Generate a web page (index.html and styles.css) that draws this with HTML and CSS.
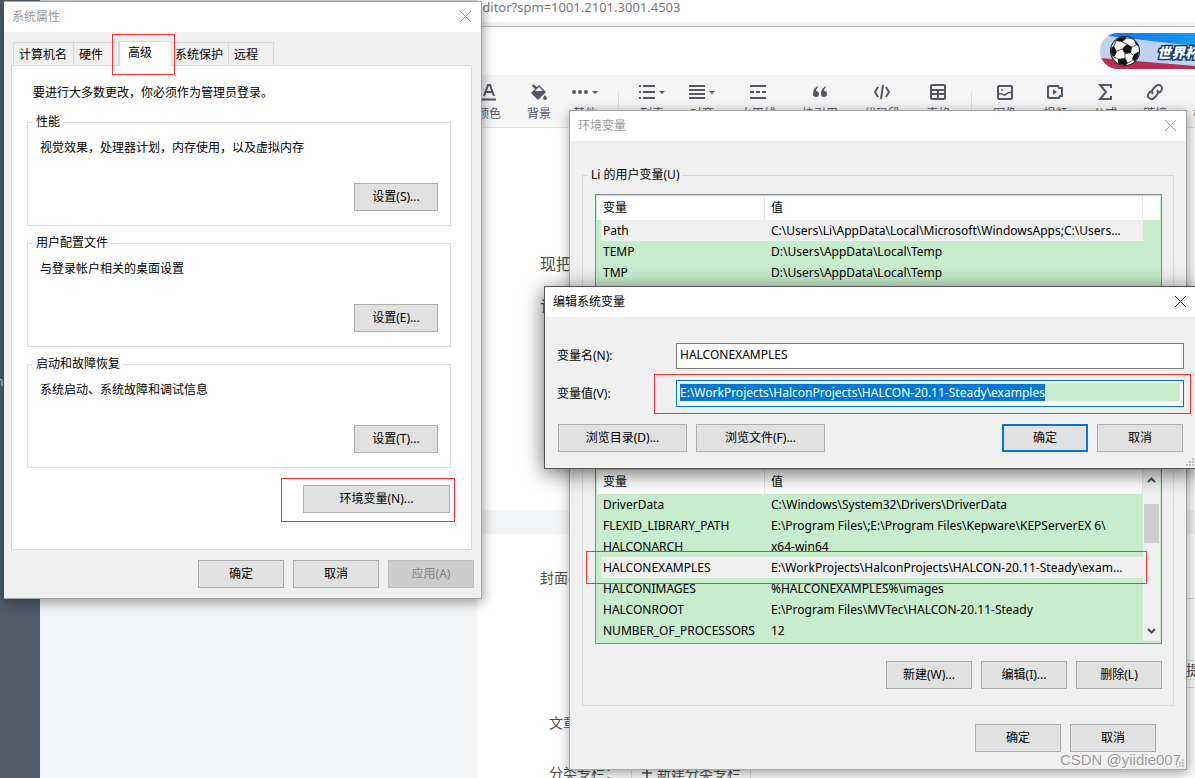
FILE: index.html
```html
<!DOCTYPE html>
<html lang="zh-CN">
<head>
    <meta charset="UTF-8">
    <meta name="viewport" content="width=device-width, initial-scale=1.0">
    <title>环境变量</title>
    <link rel="stylesheet" href="styles.css">
</head>
<body>
    <!-- blog editor behind the dialogs -->
    <div class="desktop">
        <div class="sidebar">n</div>
        <div class="panel"></div>
        <main class="editor">
            <div class="address">editor?spm=1001.2101.3001.4503</div>
            <header class="header">
                <svg class="banner" width="120" height="36" viewBox="0 0 120 36">
                    <defs>
                        <linearGradient id="sky" x1="0" x2="1" y1="0" y2="0">
                            <stop offset="0" stop-color="#1f6fe8"/>
                            <stop offset="1" stop-color="#10a4f8"/>
                        </linearGradient>
                        <clipPath id="pill"><rect width="140" height="36" rx="18"/></clipPath>
                        <clipPath id="ball"><circle cx="25" cy="18" r="14"/></clipPath>
                    </defs>
                    <g clip-path="url(#pill)">
                        <rect width="120" height="36" fill="#bcd2f0"/>
                        <path d="M0 0H120V16L0 2Z" fill="url(#sky)"/>
                        <path d="M0 25L120 35V36H0Z" fill="#b92e50"/>
                    </g>
                    <circle cx="25" cy="18" r="15" fill="#111"/>
                    <circle cx="25" cy="18" r="14" fill="#fff"/>
                    <g clip-path="url(#ball)">
                        <path d="M27 11l5 3-1 6-6 1-3-5z M14 4l9-2 4 3-5 4-6-1z M9 15l5-2 3 6-3 5-5-2z M18 26l7-1 3 5-4 4-6-3z M34 21l6-3 1 7-6 4-3-3z M33 5l6 4 1 5-4-2z" fill="#111"/>
                        <path d="M22 9l5 2M32 14l4-2M31 20l2 2M25 21v4M22 16l-5 2M16 8l-2 5M14 24l4 2M28 30l5-3M27 5l6 1" stroke="#555" fill="none"/>
                    </g>
                    <text class="banner-text" x="57" y="25">世界杯</text>
                </svg>
            </header>
            <div class="toolbar">
                <button class="tool"><svg width="16" height="18" viewBox="0 0 16 18"><path d="M3 13L7 2h2l4 11M5 9h6M1 16.500h14" stroke-width="2"/></svg><span>颜色</span></button>
                <button class="tool"><svg width="18" height="18" viewBox="0 0 18 18"><path class="solid" d="M3 1l4 3 2-2 7 7-8 8-7-7 4-4-3-3z"/><path d="M5 8l4-4 4 4z" fill="#f5f5f5" stroke="none"/><path class="solid" d="M15 12l2 3a2 2 0 1 1-4 0z"/></svg><span>背景</span></button>
                <button class="tool more"><svg width="28" height="18" viewBox="0 0 28 18"><circle class="solid" cx="3" cy="9" r="2"/><circle class="solid" cx="9" cy="9" r="2"/><circle class="solid" cx="15" cy="9" r="2"/><path class="solid" d="M21 8h6l-3 3z"/></svg><span>其他</span></button>
                <span class="divider"></span>
                <button class="tool"><svg width="28" height="18" viewBox="0 0 28 18"><path d="M1 3h2M1 9h2M1 15h2M5 3h12M5 9h12M5 15h12" stroke-width="2"/><path class="solid" d="M21 8h6l-3 3z"/></svg><span>列表</span></button>
                <button class="tool"><svg width="28" height="18" viewBox="0 0 28 18"><path d="M1 3h16M1 7h16M1 11h16M1 15h16" stroke-width="2"/><path class="solid" d="M21 8h6l-3 3z"/></svg><span>对齐</span></button>
                <button class="tool"><svg width="18" height="18" viewBox="0 0 18 18"><path d="M1 3h16M1 9h4M7 9h4M13 9h4M1 15h16" stroke-width="2"/></svg><span>水平线</span></button>
                <button class="tool"><svg width="16" height="18" viewBox="0 0 16 18"><path class="solid" d="M6 3C2 5 1 8 1 11a3 3 0 1 0 3-3c0-2 1-3 2-4zM14 3c-4 2-5 5-5 8a3 3 0 1 0 3-3c0-2 1-3 2-4z"/></svg><span>块引用</span></button>
                <button class="tool"><svg width="18" height="18" viewBox="0 0 18 18"><path d="M5 4L2 9l3 5M13 4l3 5-3 5M10 2L8 16" stroke-width="2"/></svg><span>代码段</span></button>
                <button class="tool"><svg width="18" height="18" viewBox="0 0 18 18"><rect x="2" y="2" width="14" height="14" rx="1" stroke-width="2"/><path d="M2 7h14M2 11h14M9 7v9" stroke-width="2"/></svg><span>表格</span></button>
                <span class="divider"></span>
                <button class="tool"><svg width="18" height="18" viewBox="0 0 18 18"><rect x="2" y="3" width="14" height="13" rx="1" stroke-width="2"/><path d="M2 12c3-4 5 1 7 0s3-4 7-2" stroke-width="1.500"/><circle class="solid" cx="6" cy="7" r="1"/></svg><span>图像</span></button>
                <button class="tool"><svg width="18" height="18" viewBox="0 0 18 18"><path d="M13 15H3a1 1 0 0 1-1-1V4a1 1 0 0 1 1-1h9l1 2h3v8h-2z" stroke-width="2"/><path class="solid" d="M7 6l4 3-4 3z"/></svg><span>视频</span></button>
                <button class="tool"><svg width="16" height="18" viewBox="0 0 16 18"><path d="M14 5V2H3l6 7-6 7h11v-3" stroke-width="2"/></svg><span>公式</span></button>
                <button class="tool"><svg width="18" height="18" viewBox="0 0 18 18"><path d="M7 11c-2-2-1-4 1-6l2-2c3-3 8 1 5 5l-2 2M11 7c2 2 1 4-1 6l-2 2c-3 3-8-1-5-5l2-2" stroke-width="2"/></svg><span>链接</span></button>
                <button class="tool"><svg width="18" height="18" viewBox="0 0 18 18"></svg><span>模板</span></button>
            </div>
            <article class="article">
                <p>现把</p>
                <p>记录</p>
            </article>
            <div class="band"></div>
            <section class="publish">
                <span class="publish-label">封面&amp;摘要：</span>
                <div class="summary"><button class="extract">提取摘要</button></div>
                <span class="publish-label">文章标签：</span>
                <div class="column-row">
                    <span class="publish-label">分类专栏：</span>
                    <button class="add-column"><svg width="12" height="12" viewBox="0 0 12 12"><path d="M6 1v10M1 6h10" stroke-width="1.500"/></svg>新建分类专栏</button>
                </div>
            </section>
        </main>
    </div>

    <!-- system properties -->
    <section class="window system">
        <div class="titlebar">
            <span>系统属性</span>
            <button class="close" aria-label="关闭"><svg width="11" height="11" viewBox="0 0 11 11"><path d="M0 0L11 11M11 0L0 11"/></svg></button>
        </div>
        <div class="tabs">
            <button class="tab">计算机名</button>
            <button class="tab">硬件</button>
            <div class="marked mark-tab"><button class="tab active">高级</button></div>
            <button class="tab tight">系统保护</button>
            <button class="tab">远程</button>
        </div>
        <div class="tab-page">
            <p class="notice">要进行大多数更改，你必须作为管理员登录。</p>
            <fieldset class="group">
                <legend>性能</legend>
                <p>视觉效果，处理器计划，内存使用，以及虚拟内存</p>
                <button class="btn">设置(S)...</button>
            </fieldset>
            <fieldset class="group">
                <legend>用户配置文件</legend>
                <p>与登录帐户相关的桌面设置</p>
                <button class="btn">设置(E)...</button>
            </fieldset>
            <fieldset class="group">
                <legend>启动和故障恢复</legend>
                <p>系统启动、系统故障和调试信息</p>
                <button class="btn">设置(T)...</button>
            </fieldset>
            <div class="marked mark-env"><button class="btn env-btn">环境变量(N)...</button></div>
        </div>
        <div class="actions">
            <button class="btn">确定</button>
            <button class="btn">取消</button>
            <button class="btn" disabled>应用(A)</button>
        </div>
    </section>

    <!-- environment variables -->
    <section class="window env">
        <div class="titlebar">
            <span>环境变量</span>
            <button class="close" aria-label="关闭"><svg width="11" height="11" viewBox="0 0 11 11"><path d="M0 0L11 11M11 0L0 11"/></svg></button>
        </div>
        <fieldset class="vars user-vars">
            <legend>Li 的用户变量(U)</legend>
            <div class="list">
                <table>
                    <thead><tr><th class="name">变量</th><th>值</th></tr></thead>
                    <tbody>
                        <tr class="selected"><td>Path</td><td>C:\Users\Li\AppData\Local\Microsoft\WindowsApps;C:\Users...</td></tr>
                        <tr><td>TEMP</td><td>D:\Users\AppData\Local\Temp</td></tr>
                        <tr><td>TMP</td><td>D:\Users\AppData\Local\Temp</td></tr>
                    </tbody>
                </table>
                <div class="list-end"></div>
            </div>
        </fieldset>
        <div class="vars system-vars">
            <div class="list">
                <table>
                    <thead><tr><th class="name">变量</th><th>值</th></tr></thead>
                    <tbody>
                        <tr><td>DriverData</td><td>C:\Windows\System32\Drivers\DriverData</td></tr>
                        <tr><td>FLEXID_LIBRARY_PATH</td><td>E:\Program Files\;E:\Program Files\Kepware\KEPServerEX 6\</td></tr>
                        <tr><td>HALCONARCH</td><td>x64-win64</td></tr>
                        <tr class="selected"><td class="marked mark-row">HALCONEXAMPLES</td><td>E:\WorkProjects\HalconProjects\HALCON-20.11-Steady\exam...</td></tr>
                        <tr><td>HALCONIMAGES</td><td>%HALCONEXAMPLES%\images</td></tr>
                        <tr><td>HALCONROOT</td><td>E:\Program Files\MVTec\HALCON-20.11-Steady</td></tr>
                        <tr><td>NUMBER_OF_PROCESSORS</td><td>12</td></tr>
                    </tbody>
                </table>
                <div class="scrollbar">
                    <svg width="9" height="6" viewBox="0 0 9 6"><path d="M1 5l3.500-3.500L8 5"/></svg>
                    <div class="thumb"></div>
                    <svg width="9" height="6" viewBox="0 0 9 6"><path d="M1 1l3.500 3.500L8 1"/></svg>
                </div>
            </div>
            <div class="list-actions">
                <button class="btn">新建(W)...</button>
                <button class="btn">编辑(I)...</button>
                <button class="btn">删除(L)</button>
            </div>
        </div>
        <div class="actions">
            <button class="btn">确定</button>
            <button class="btn">取消</button>
        </div>
        <svg class="grip" width="8" height="8" viewBox="0 0 8 8"><path d="M6 0h2v2H6zM3 3h2v2H3zM6 3h2v2H6zM0 6h2v2H0zM3 6h2v2H3zM6 6h2v2H6z"/></svg>
    </section>

    <!-- edit system variable -->
    <section class="window edit">
        <div class="titlebar">
            <span>编辑系统变量</span>
            <button class="close" aria-label="关闭"><svg width="11" height="11" viewBox="0 0 11 11"><path d="M0 0L11 11M11 0L0 11"/></svg></button>
        </div>
        <div class="fields">
            <label for="varName">变量名(N):</label>
            <input type="text" id="varName" value="HALCONEXAMPLES">
            <label for="varValue">变量值(V):</label>
            <div class="marked mark-value"><input type="text" id="varValue" value="E:\WorkProjects\HalconProjects\HALCON-20.11-Steady\examples" spellcheck="false"></div>
        </div>
        <div class="edit-actions">
            <button class="btn wide">浏览目录(D)...</button>
            <button class="btn wide">浏览文件(F)...</button>
            <span class="spacer"></span>
            <button class="btn default">确定</button>
            <button class="btn">取消</button>
        </div>
        <svg class="grip" width="8" height="8" viewBox="0 0 8 8"><path d="M6 0h2v2H6zM3 3h2v2H3zM6 3h2v2H6zM0 6h2v2H0zM3 6h2v2H3zM6 6h2v2H6z"/></svg>
    </section>

    <div class="watermark">CSDN @yiidie007</div>

    <script>
        // The value is selected when the dialog opens
        const valueInput = document.getElementById('varValue');
        valueInput.focus();
        valueInput.select();
    </script>
</body>
</html>
```
FILE: styles.css
```css
* {
    box-sizing: border-box;
}

body {
    margin: 0;
    height: 100vh;
    position: relative;
    overflow: hidden;
    font-family: "Noto Sans", "Noto Sans CJK SC", sans-serif;
    font-size: 12px;
    line-height: 16px;
    color: #000;
}

button, input {
    font: inherit;
    color: inherit;
}

p {
    margin: 0;
}

/* editor page */
.desktop {
    display: flex;
    height: 100%;
}

.sidebar {
    flex: 0 0 40px;
    padding-top: 374px;
    background: #4f5b69;
    color: #ddd;
    text-indent: -4px;
}

.panel {
    flex: 0 0 437px;
    background: #f4f5f7;
    border-top: 2px solid #ddd;
}

.editor {
    flex: 1;
    min-width: 0;
    overflow: hidden;
    background: #fff;
    color: #4d4d4d;
}

.address {
    height: 27px;
    border-bottom: 1px solid #b9b9b9;
    background: linear-gradient(#fff 22px, #f0f0f0 22px);
    font-size: 13px;
    line-height: 14px;
    color: #777;
    text-indent: -2px;
}

.header {
    display: flex;
    justify-content: flex-end;
    height: 48px;
    padding-top: 6px;
}

.banner {
    flex: none;
    margin-right: -25px;
}

.banner-text {
    font-size: 14px;
    font-weight: 900;
    font-style: italic;
    fill: #fff;
    stroke: #123c73;
    stroke-width: 3px;
    paint-order: stroke;
}

.toolbar {
    display: flex;
    align-items: flex-start;
    gap: 26px;
    height: 53px;
    padding-top: 8px;
    background: #f5f5f5;
    border-bottom: 1px solid #e4e4e4;
}

.tool {
    display: flex;
    flex-direction: column;
    align-items: center;
    flex: none;
    gap: 5px;
    padding: 0;
    border: 0;
    background: none;
    color: #555666;
}

.tool.more {
    margin-left: -4px;
}

.tool svg {
    margin: 0 -2px;
    fill: none;
    stroke: #555666;
}

.tool .solid {
    fill: #555666;
    stroke: none;
}

.divider {
    flex: none;
    width: 1px;
    height: 24px;
    margin: 9px -5px 0;
    background: #ddd;
}

.article {
    height: 382px;
    padding: 124px 0 0 63px;
    font-size: 16px;
    line-height: 24px;
}

.article p {
    margin-bottom: 18px;
}

.band {
    height: 24px;
    background: #f4f5f7;
}

.publish {
    padding: 34px 0 0 63px;
    font-size: 14px;
    line-height: 20px;
}

.publish-label {
    display: block;
    width: 79px;
    text-align: right;
    white-space: nowrap;
}

.summary {
    display: flex;
    justify-content: flex-end;
    align-items: flex-end;
    height: 90px;
    margin: 10px 0 25px 91px;
    padding-bottom: 7px;
    border: solid #dcdfe6;
    border-width: 1px 0;
}

.extract {
    height: 20px;
    flex: none;
    margin-right: -53px;
    padding: 0 5px;
    border: 1px solid #dcdfe6;
    background: #fff;
    line-height: 16px;
}

.column-row {
    display: flex;
    gap: 12px;
    margin-top: 30px;
}

.add-column {
    display: flex;
    align-items: center;
    gap: 4px;
    height: 32px;
    margin-top: -6px;
    padding: 0 9px;
    border: 1px solid #d5dde8;
    background: #fff;
}

.add-column svg {
    stroke: #4d4d4d;
}

/* dialogs */
.window {
    position: absolute;
    display: flex;
    flex-direction: column;
    border: 1px solid #a5a5a5;
    background: #f0f0f0;
    box-shadow: 1px 3px 12px rgba(0, 0, 0, 0.4);
}

.titlebar {
    display: flex;
    justify-content: space-between;
    align-items: center;
    flex: none;
    height: 30px;
    padding: 0 10px 0 8px;
    background: #fff;
    color: #999;
}

.close {
    display: flex;
    padding: 0 0 1px;
    border: 0;
    background: none;
}

.close svg {
    stroke: currentColor;
}

.btn {
    width: 86px;
    height: 28px;
    padding: 0;
    border: 1px solid #adadad;
    background: #e1e1e1;
}

.btn:disabled {
    border-color: #bfbfbf;
    background: #ccc;
    color: #838383;
}

.btn.wide {
    width: 129px;
}

.btn.default {
    border: 2px solid #0078d7;
}

.grip {
    position: absolute;
    right: 2px;
    bottom: 2px;
    fill: #bfbfbf;
}

/* red highlight frames */
.marked {
    position: relative;
}

.marked::after {
    content: "";
    position: absolute;
    z-index: 1;
    border: 1px solid #f33;
    pointer-events: none;
}

.mark-tab::after {
    inset: -7px -3px -9px -7px;
}

.mark-env::after {
    inset: -7px -5px -9px -22px;
}

/* reaches from the name cell over the value cell */
.mark-row::after {
    inset: -6px -382px -6px -11px;
}

.mark-value::after {
    inset: -6px -7px -7px -22px;
}

/* system properties */
.system {
    left: 4px;
    top: 1px;
    width: 478px;
    border-left: 0;
}

.tabs {
    display: flex;
    align-items: flex-end;
    height: 33px;
    padding-left: 9px;
}

.tab {
    height: 23px;
    padding: 1px 15px 0 5px;
    border: 1px solid #d9d9d9;
    border-width: 1px 1px 0 0;
    background: #f0f0f0;
}

.tab:first-child {
    padding-right: 6px;
    border-left-width: 1px;
}

.tab.tight {
    padding: 1px 5px 0 3px;
}

.tab.active {
    width: 53px;
    height: 25px;
    padding: 0 0 2px 8px;
    border-left-width: 1px;
    background: #fff;
    text-align: left;
}

.mark-tab {
    z-index: 1;
    display: flex;
    margin-bottom: -1px;
}

.tab-page {
    margin: 0 9px 0 7px;
    height: 485px;
    padding: 19px 20px 0 15px;
    border: 1px solid #d9d9d9;
    background: #fff;
}

.notice {
    padding-left: 6px;
    margin-bottom: 13px;
}

.group {
    display: flex;
    flex-direction: column;
    justify-content: space-between;
    height: 112px;
    margin: 0 0 9px;
    padding: 10px 12px 14px;
    border: 1px solid #dcdcdc;
}

.group legend {
    margin-left: -7px;
    padding: 0 3px;
}

.group .btn {
    width: 84px;
    align-self: flex-end;
}

.mark-env {
    width: 147px;
    margin: 17px 1px 0 auto;
}

.env-btn {
    display: block;
    width: 100%;
}

.actions {
    display: flex;
    justify-content: flex-end;
    gap: 9px;
    padding: 10px 7px;
}

/* environment variables */
.env {
    left: 569px;
    top: 110px;
    width: 618px;
    height: 660px;
}

.vars {
    margin: 0 12px;
    padding: 11px 11px 0 12px;
    border: 1px solid #dcdcdc;
}

.user-vars {
    height: 264px;
    margin-top: 26px;
    padding-top: 11px;
}

.user-vars legend {
    margin-left: -7px;
    padding: 0 3px;
}

.system-vars {
    height: 257px;
    margin-top: 18px;
    padding-top: 18px;
}

.list {
    display: flex;
    padding: 1px 1px 2px;
    border: 1px solid #828790;
    background: #c7edcc;
}

.user-vars .list {
    height: 176px;
}

.list table {
    flex: 1;
    width: 100%;
    min-width: 0;
    align-self: flex-start;
    table-layout: fixed;
    border-collapse: separate;
    border-spacing: 0;
}

.list th {
    height: 24px;
    padding: 0 0 0 6px;
    border-right: 1px solid #e5e5e5;
    background: #fff;
    font-weight: normal;
    text-align: left;
}

.list .name {
    width: 168px;
}

.list td {
    height: 21px;
    padding: 0 0 0 6px;
    white-space: nowrap;
}

.selected td {
    background: #f0f0f0;
}

.selected td:first-child {
    box-shadow: inset 4px 0 #c7edcc;
}

.list-end {
    flex: none;
    width: 17px;
    height: 24px;
    background: #fff;
}

.scrollbar {
    display: flex;
    flex: none;
    flex-direction: column;
    align-items: center;
    width: 17px;
    padding: 7px 0;
    background: #f0f0f0;
}

.scrollbar svg {
    fill: none;
    stroke: #505050;
    stroke-width: 2px;
}

.thumb {
    width: 15px;
    height: 39px;
    margin: 21px 0 auto;
    background: #cdcdcd;
}

.list-actions {
    display: flex;
    justify-content: flex-end;
    gap: 9px;
    padding: 17px 0 0;
}

.env .actions {
    padding: 18px 30px 0 0;
}

/* edit system variable */
.edit {
    left: 544px;
    right: -2px;
    top: 286px;
    border-color: #555;
    box-shadow: 0 4px 20px rgba(0, 0, 0, 0.6);
}

.edit .titlebar {
    color: #000;
}

.fields {
    display: grid;
    grid-template-columns: 110px 1fr;
    align-items: center;
    gap: 11px 9px;
    padding: 26px 12px 17px;
}

.fields input {
    display: block;
    width: 100%;
    height: 26px;
    padding: 1px 3px 4px;
    border: 1px solid #7a7a7a;
    background: #fff;
    outline: none;
}

.fields #varValue {
    height: 27px;
    padding: 2px 3px 5px;
    border-color: #0078d7;
    background: linear-gradient(#c7edcc, #c7edcc) content-box, #fff;
}

#varValue::selection {
    background: #0078d7;
    color: #fff;
}

.edit-actions {
    display: flex;
    gap: 9px;
    padding: 0 13px 16px;
}

.spacer {
    flex: 1;
}

.watermark {
    position: absolute;
    right: 14px;
    bottom: 10px;
    font-family: "Liberation Sans", sans-serif;
    font-size: 15px;
    color: #999;
    text-shadow: 1px 1px #fff;
}
```
